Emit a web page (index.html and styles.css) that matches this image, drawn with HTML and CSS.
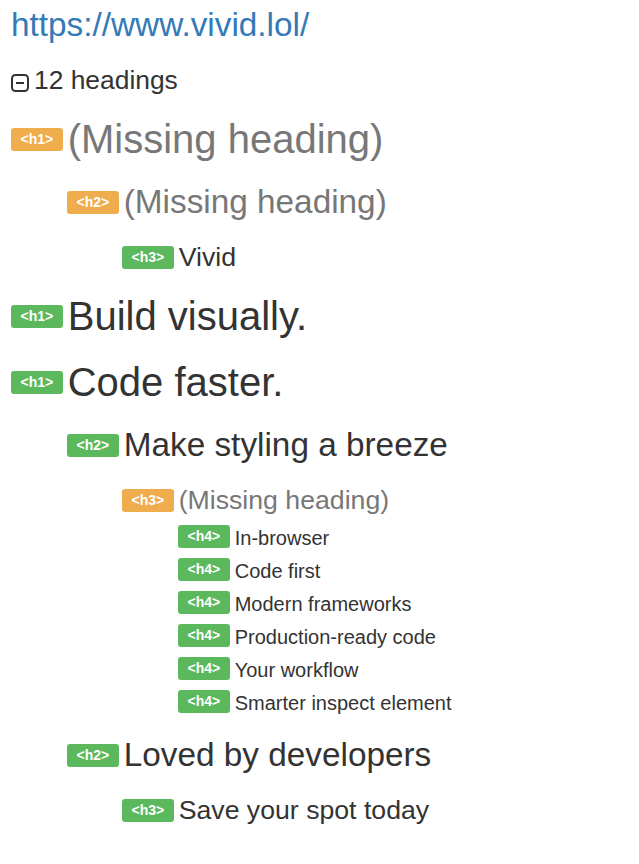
FILE: index.html
```html
<!DOCTYPE html>
<html lang="en">
<head>
<meta charset="utf-8">
<title>Headings outline</title>
<link rel="stylesheet" href="styles.css">
</head>
<body>
<div class="outline">
  <a class="url" href="#">https://www.vivid.lol/</a>
  <div class="summary">
    <svg class="toggle" width="18" height="18" viewBox="0 0 18 18" aria-hidden="true">
      <rect x="1" y="1" width="16" height="16" rx="3.5" ry="3.5" fill="none" stroke="#333" stroke-width="2"/>
      <line x1="5" y1="9" x2="13" y2="9" stroke="#333" stroke-width="2"/>
    </svg>
    <span>12 headings</span>
  </div>
  <ul class="tree">
    <li class="row lv1"><span class="badge warn">&lt;h1&gt;</span><span class="title missing">(Missing heading)</span></li>
    <li class="row lv2"><span class="badge warn">&lt;h2&gt;</span><span class="title missing">(Missing heading)</span></li>
    <li class="row lv3"><span class="badge ok">&lt;h3&gt;</span><span class="title">Vivid</span></li>
    <li class="row lv1"><span class="badge ok">&lt;h1&gt;</span><span class="title">Build visually.</span></li>
    <li class="row lv1"><span class="badge ok">&lt;h1&gt;</span><span class="title">Code faster.</span></li>
    <li class="row lv2"><span class="badge ok">&lt;h2&gt;</span><span class="title">Make styling a breeze</span></li>
    <li class="row lv3"><span class="badge warn">&lt;h3&gt;</span><span class="title missing">(Missing heading)</span></li>
    <li class="row lv4"><span class="badge ok">&lt;h4&gt;</span><span class="title">In-browser</span></li>
    <li class="row lv4"><span class="badge ok">&lt;h4&gt;</span><span class="title">Code first</span></li>
    <li class="row lv4"><span class="badge ok">&lt;h4&gt;</span><span class="title">Modern frameworks</span></li>
    <li class="row lv4"><span class="badge ok">&lt;h4&gt;</span><span class="title">Production-ready code</span></li>
    <li class="row lv4"><span class="badge ok">&lt;h4&gt;</span><span class="title">Your workflow</span></li>
    <li class="row lv4"><span class="badge ok">&lt;h4&gt;</span><span class="title">Smarter inspect element</span></li>
    <li class="row lv2"><span class="badge ok">&lt;h2&gt;</span><span class="title">Loved by developers</span></li>
    <li class="row lv3"><span class="badge ok">&lt;h3&gt;</span><span class="title">Save your spot today</span></li>
  </ul>
</div>
</body>
</html>
```
FILE: styles.css
```css
body {
  margin: 0;
  background: #fff;
  color: #333;
  font-family: "Liberation Sans", Arial, Helvetica, sans-serif;
}

.outline {
  padding: 7px 11px;
}

.url {
  display: block;
  font-size: 33.33px;
  line-height: 36px;
  color: #337ab7;
  text-decoration: none;
}

.summary {
  display: flex;
  align-items: center;
  gap: 5px;
  margin: 23px 0 0 0;
  font-size: 26.4px;
  line-height: 29px;
}

.toggle {
  flex: none;
  margin-top: 4px;
}

.tree {
  list-style: none;
  margin: 0;
  padding: 0;
}

.row {
  display: flex;
  align-items: center;
  gap: 5px;
  margin: 23px 0 11px;
}

.lv1 { font-size: 40px; line-height: 43px; }
.lv2 { font-size: 33.33px; line-height: 36px; margin-left: 56px; }
.lv3 { font-size: 26.67px; line-height: 29px; margin-left: 111px; margin-bottom: 12px; }
.lv4 { font-size: 20px; line-height: 22px; margin-left: 167px; margin-top: 11px; }

.badge {
  flex: none;
  height: 23px;
  padding: 0 9.5px;
  border-radius: 3px;
  color: #fff;
  font-size: 14px;
  font-weight: bold;
  line-height: 23px;
}

.lv4 .badge {
  margin-top: -4px;
}

.warn { background: #f0ad4e; }
.ok { background: #5cb85c; }

.title { white-space: nowrap; }
.missing { color: #777; }
```
